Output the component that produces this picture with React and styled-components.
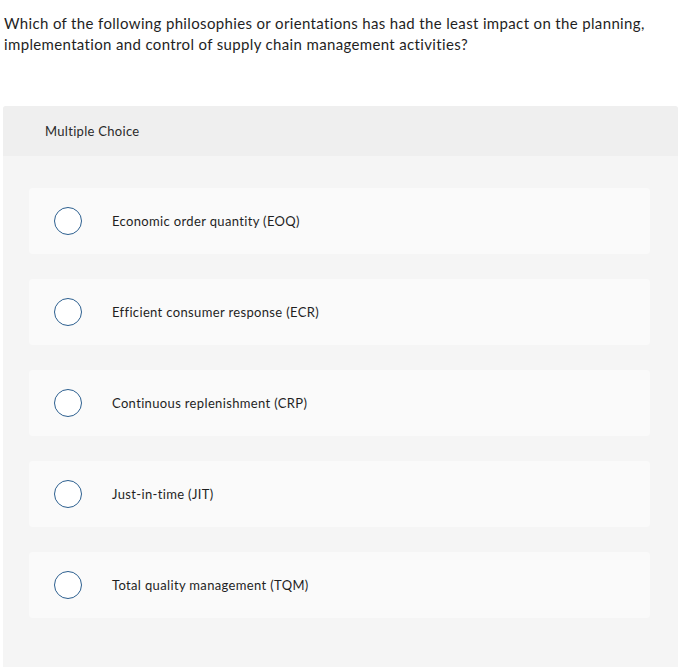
import React from 'react';
import styled, { createGlobalStyle } from 'styled-components';

const GlobalStyle = createGlobalStyle`
  html, body {
    margin: 0;
    padding: 0;
    background: #ffffff;
  }
  body {
    font-family: Lato, 'Open Sans', Arial, sans-serif;
    color: #1f1f1f;
  }
`;

const Page = styled.div`
  padding: 13px 12px 0 3px;
  width: 690px;
  box-sizing: border-box;
`;

const Question = styled.p`
  margin: 0 0 51px 1px;
  font-size: 15px;
  line-height: 21px;
  letter-spacing: 0.35px;
  color: #1f1f1f;
`;

const Panel = styled.section`
  width: 675px;
  background: #f5f5f5;
  border-radius: 3px 3px 0 0;
  padding-bottom: 60px;
`;

const PanelHeader = styled.div`
  height: 50px;
  display: flex;
  align-items: center;
  padding-left: 42px;
  background: #efefef;
  border-radius: 3px 3px 0 0;
  font-size: 13px;
  letter-spacing: 0.3px;
  color: #2a2a2a;
`;

const Choices = styled.div`
  display: flex;
  flex-direction: column;
  gap: 25px;
  padding: 32px 28px 0 26px;
`;

const Choice = styled.label`
  height: 66px;
  display: flex;
  align-items: center;
  gap: 30px;
  padding-left: 25px;
  background: #fafafa;
  border-radius: 4px;
  font-size: 13px;
  letter-spacing: 0.35px;
  color: #1f1f1f;
  cursor: pointer;
`;

const Radio = styled.span`
  width: 28px;
  height: 28px;
  box-sizing: border-box;
  border-radius: 50%;
  border: 1.5px solid #2c5f8f;
  background: #ffffff;
  flex-shrink: 0;
`;

const options = [
  'Economic order quantity (EOQ)',
  'Efficient consumer response (ECR)',
  'Continuous replenishment (CRP)',
  'Just-in-time (JIT)',
  'Total quality management (TQM)',
];

const App = () => {
  return (
    <Page>
      <GlobalStyle />
      <Question>
        Which of the following philosophies or orientations has had the least impact on the planning,
        implementation and control of supply chain management activities?
      </Question>
      <Panel>
        <PanelHeader>Multiple Choice</PanelHeader>
        <Choices>
          {options.map((o) => (
            <Choice key={o}>
              <Radio />
              <span>{o}</span>
            </Choice>
          ))}
        </Choices>
      </Panel>
    </Page>
  );
};

export default App;
